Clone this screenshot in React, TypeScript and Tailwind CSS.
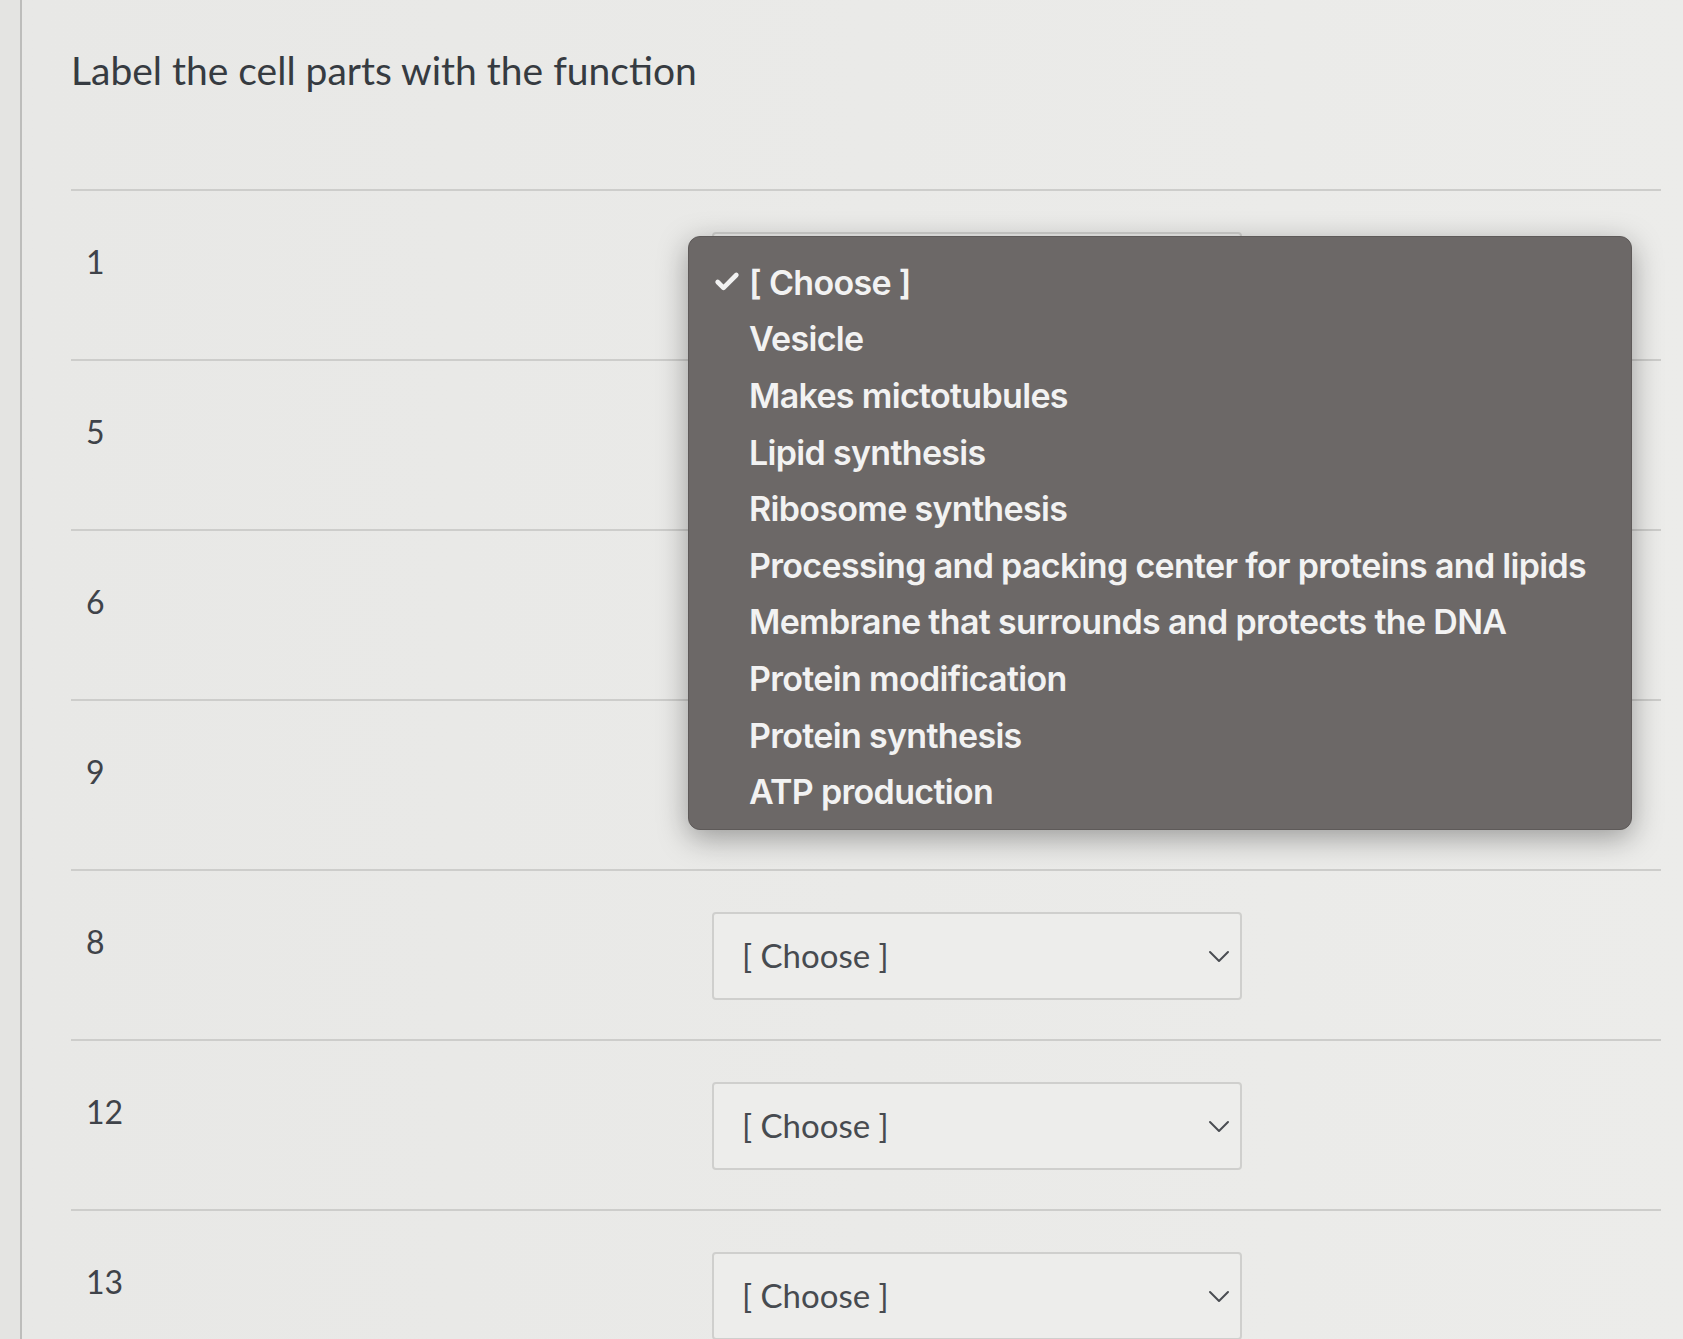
import { Check } from "lucide-react";

const ROWS = [
  { n: "1", covered: true },
  { n: "5", covered: true },
  { n: "6", covered: true },
  { n: "9", covered: true },
  { n: "8", covered: false },
  { n: "12", covered: false },
  { n: "13", covered: false },
];

const OPTIONS = [
  "[ Choose ]",
  "Vesicle",
  "Makes mictotubules",
  "Lipid synthesis",
  "Ribosome synthesis",
  "Processing and packing center for proteins and lipids",
  "Membrane that surrounds and protects the DNA",
  "Protein modification",
  "Protein synthesis",
  "ATP production",
];

function Chevron() {
  return (
    <svg width="22" height="13" viewBox="0 0 22 13" fill="none">
      <path d="M2 2 L11 11 L20 2" stroke="#4a4d52" strokeWidth="2" strokeLinecap="round" strokeLinejoin="round" />
    </svg>
  );
}

// covered boxes sit under the open menu, so their label is not drawn
function ChooseBox({ covered }: { covered: boolean }) {
  return (
    <div className="w-[530px] h-[88px] flex items-center justify-between rounded-[4px] border-2 border-[#cfcfcd] bg-[#ededeb] pl-[28px] pr-[10px]">
      {!covered && <span className="text-[33px] text-[#474b50] font-['Lato',sans-serif]">[ Choose ]</span>}
      {!covered && <Chevron />}
    </div>
  );
}

export default function App() {
  return (
    <div className="relative w-[1683px] h-[1339px] overflow-hidden bg-[#e9e9e7] font-['Lato',sans-serif] flex">
      <div className="w-[22px] shrink-0 bg-[#e4e4e2] border-r-2 border-[#bdbdbb]" />
      <div className="flex-1 pl-[49px] pr-[22px] bg-gradient-to-r from-[#e8e8e6] to-[#ececea]">
        <div className="h-[189px] pt-[44px]">
          <h1 className="text-[39px] leading-[52px] text-[#363b41]">Label the cell parts with the function</h1>
        </div>
        {ROWS.map((r) => (
          <div key={r.n} className="h-[170px] border-t-2 border-[#cdcdcb] flex items-start pt-[41px]">
            <div className="w-[641px] pl-[15px] pt-[10px] text-[32px] leading-[40px] text-[#3f4349]">{r.n}</div>
            <ChooseBox covered={r.covered} />
          </div>
        ))}
      </div>

      {/* open native dropdown menu */}
      <div className="absolute left-[688px] top-[236px] w-[944px] h-[594px] rounded-[12px] bg-[#6c6867] border border-[#5e5a59] shadow-[0_8px_30px_rgba(0,0,0,0.35)] pt-[17px] font-['Inter',sans-serif]">
        {OPTIONS.map((o, i) => (
          <div key={o} className="h-[56.6px] flex items-center text-[34px] font-semibold tracking-[-0.02em] text-[#f2f2f2]">
            <div className="w-[60px] pl-[24px] flex items-center">
              {i === 0 && <Check size={28} strokeWidth={4} color="#f2f2f2" />}
            </div>
            <span>{o}</span>
          </div>
        ))}
      </div>
    </div>
  );
}
